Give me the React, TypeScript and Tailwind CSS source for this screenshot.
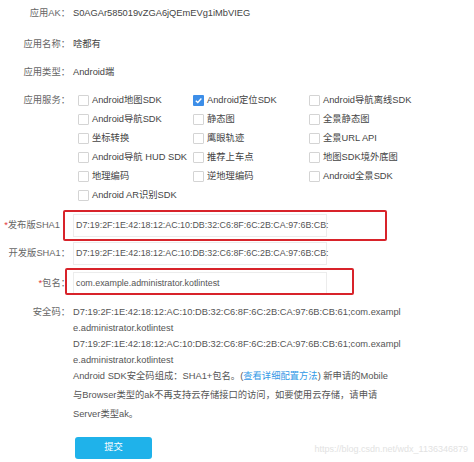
import React from 'react';

const FONT = { fontFamily: '"Liberation Sans", "Noto Sans CJK SC", sans-serif' };

const SERVICES: { label: string; checked?: boolean }[][] = [
  [{ label: 'Android地图SDK' }, { label: 'Android定位SDK', checked: true }, { label: 'Android导航离线SDK' }],
  [{ label: 'Android导航SDK' }, { label: '静态图' }, { label: '全景静态图' }],
  [{ label: '坐标转换' }, { label: '鹰眼轨迹' }, { label: '全景URL API' }],
  [{ label: 'Android导航 HUD SDK' }, { label: '推荐上车点' }, { label: '地图SDK境外底图' }],
  [{ label: '地理编码' }, { label: '逆地理编码' }, { label: 'Android全景SDK' }],
  [{ label: 'Android AR识别SDK' }],
];

const SHA1 = 'D7:19:2F:1E:42:18:12:AC:10:DB:32:C6:8F:6C:2B:CA:97:6B:CB:';

function Label({ children }: { children: React.ReactNode }) {
  return <div className="w-[70px] shrink-0 text-right text-[#666]">{children}</div>;
}

function Checkbox({ checked }: { checked?: boolean }) {
  if (checked) {
    return (
      <span className="w-[11px] h-[11px] rounded-[1px] bg-[#3d8ee8] flex items-center justify-center shrink-0">
        <svg viewBox="0 0 10 10" className="w-[9px] h-[9px]">
          <path d="M2 5.2 L4.2 7.3 L8.2 2.8" fill="none" stroke="#fff" strokeWidth="1.5" />
        </svg>
      </span>
    );
  }
  return <span className="w-[11px] h-[11px] rounded-[1px] border border-[#d4d4d4] bg-white shrink-0" />;
}

function Field({ value }: { value: string }) {
  return (
    <div className="w-[254px] h-[23px] border border-[#ececec] bg-white flex items-center pl-[2px] text-[8.9px] text-[#555] whitespace-nowrap">
      {value}
    </div>
  );
}

export default function App() {
  return (
    <div className="w-[474px] h-[462px] bg-white relative overflow-hidden text-[9.3px] text-[#444]" style={FONT}>
      <div className="pt-[4px]">
        {/* basic info */}
        <div className="flex leading-[18px] gap-[3px]">
          <Label>应用AK：</Label>
          <div>S0AGAr585019vZGA6jQEmEVg1iMbVIEG</div>
        </div>
        <div className="flex leading-[18px] gap-[3px] mt-[13px]">
          <Label>应用名称：</Label>
          <div>啥都有</div>
        </div>
        <div className="flex leading-[18px] gap-[3px] mt-[10px]">
          <Label>应用类型：</Label>
          <div>Android端</div>
        </div>

        {/* services */}
        <div className="flex gap-[3px] mt-[10px]">
          <div className="w-[70px] shrink-0 text-right text-[#666] leading-[19px]">应用服务：</div>
          <div className="ml-[5px]">
            {SERVICES.map((row, i) => (
              <div key={i} className="grid grid-cols-[115px_116px_auto] leading-[19px]">
                {row.map(s => (
                  <div key={s.label} className="flex items-center gap-[3px] whitespace-nowrap">
                    <Checkbox checked={s.checked} />
                    <span>{s.label}</span>
                  </div>
                ))}
              </div>
            ))}
          </div>
        </div>

        {/* release SHA1 */}
        <div className="relative flex items-center gap-[3px] mt-[9px]">
          <div className="w-[70px] shrink-0 text-right text-[#666] pr-[10px]">
            <span className="text-[#e4393c]">*</span>发布版SHA1
          </div>
          <Field value={SHA1} />
          <div className="absolute left-[63px] top-[-4px] w-[324px] h-[31px] border-2 border-[#d8232a] rounded-[2px]" />
        </div>

        {/* dev SHA1 */}
        <div className="flex items-center gap-[3px] mt-[5px]">
          <Label>开发版SHA1：</Label>
          <Field value={SHA1} />
        </div>

        {/* package name */}
        <div className="relative flex items-center gap-[3px] mt-[7px]">
          <Label>
            <span className="text-[#e4393c]">*</span>包名：
          </Label>
          <Field value="com.example.administrator.kotlintest" />
          <div className="absolute left-[65px] top-[-4px] w-[289px] h-[27px] border-2 border-[#d8232a] rounded-[2px]" />
        </div>

        {/* security code */}
        <div className="flex gap-[3px] mt-[9px]">
          <Label>
            <span className="leading-[16px]">安全码：</span>
          </Label>
          <div className="text-[#555]">
            <div className="leading-[16px]">
              D7:19:2F:1E:42:18:12:AC:10:DB:32:C6:8F:6C:2B:CA:97:6B:CB:61;com.exampl
              <br />
              e.administrator.kotlintest
              <br />
              D7:19:2F:1E:42:18:12:AC:10:DB:32:C6:8F:6C:2B:CA:97:6B:CB:61;com.exampl
              <br />
              e.administrator.kotlintest
            </div>
            <div className="leading-[19px] mt-[-1px]">
              Android SDK安全码组成：SHA1+包名。(<span className="text-[#3399e6]">查看详细配置方法</span>) 新申请的Mobile
              <br />
              与Browser类型的ak不再支持云存储接口的访问，如要使用云存储，请申请
              <br />
              Server类型ak。
            </div>
            <button className="mt-[13px] ml-[2px] w-[77px] h-[22px] rounded-[3px] bg-[#1fb2ea] text-white text-[9.3px]">
              提交
            </button>
          </div>
        </div>
      </div>

      <div className="absolute right-[6px] bottom-[6px] text-[9px] text-[#e2e2e2]">
        https://blog.csdn.net/wdx_1136346879
      </div>
    </div>
  );
}
